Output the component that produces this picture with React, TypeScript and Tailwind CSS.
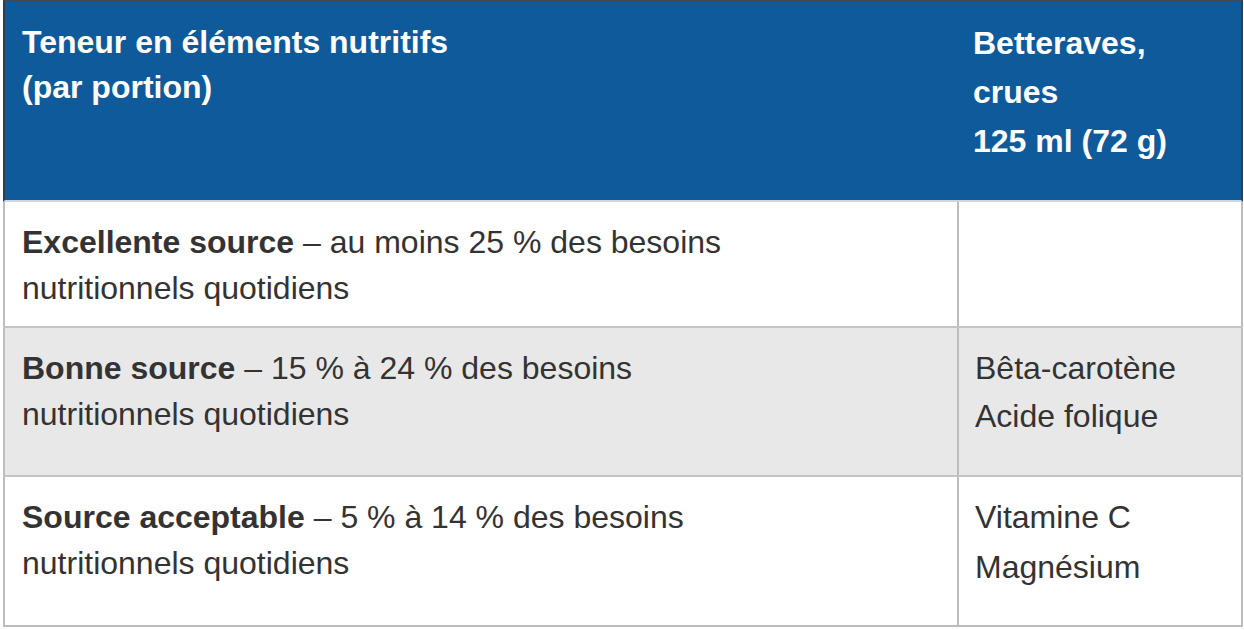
export default function App() {
  const font = { fontFamily: '"Liberation Sans", Arial, Helvetica, sans-serif' };
  return (
    <div className="w-[1244px] h-[630px] bg-white overflow-hidden" style={font}>
      <div className="ml-[3px] w-[1240px]">
        {/* Header */}
        <div className="flex h-[202px] bg-[#0f5a9b] border-t-2 border-x-2 border-t-[#45494e] border-x-[#2c3e55] border-b-2 border-b-[#cdd5dd] text-white font-bold text-[32px]">
          <div className="w-[952px] pl-[17px] pt-[18px] leading-[45px]">
            Teneur en éléments nutritifs
            <br />
            (par portion)
          </div>
          <div className="flex-1 pl-[16px] pt-[17px] leading-[49px]">
            Betteraves,
            <br />
            crues
            <br />
            125 ml (72 g)
          </div>
        </div>

        {/* Row 1 */}
        <div className="flex h-[126px] bg-white border-b-2 border-[#c4c4c4] text-[#333333] text-[32px]">
          <div className="w-[954px] border-l-2 border-[#bdbdbd] pl-[17px] pt-[17px] leading-[46px]">
            <span className="font-bold">Excellente source</span> – au moins 25&nbsp;% des besoins
            <br />
            nutritionnels quotidiens
          </div>
          <div className="flex-1 border-x-2 border-[#bdbdbd] pl-[16px] pt-[15px] leading-[49px]"></div>
        </div>

        {/* Row 2 */}
        <div className="flex h-[149px] bg-[#e8e8e8] border-b-2 border-[#c4c4c4] text-[#333333] text-[32px]">
          <div className="w-[954px] border-l-2 border-[#bdbdbd] pl-[17px] pt-[17px] leading-[46px]">
            <span className="font-bold">Bonne source</span> – 15&nbsp;% à 24&nbsp;% des besoins
            <br />
            nutritionnels quotidiens
          </div>
          <div className="flex-1 border-x-2 border-[#bdbdbd] pl-[16px] pt-[16px] leading-[48px]">
            Bêta-carotène
            <br />
            Acide folique
          </div>
        </div>

        {/* Row 3 */}
        <div className="flex h-[150px] bg-white border-b-2 border-[#bdbdbd] text-[#333333] text-[32px]">
          <div className="w-[954px] border-l-2 border-[#bdbdbd] pl-[17px] pt-[17px] leading-[46px]">
            <span className="font-bold">Source acceptable</span> – 5&nbsp;% à 14&nbsp;% des besoins
            <br />
            nutritionnels quotidiens
          </div>
          <div className="flex-1 border-x-2 border-[#bdbdbd] pl-[16px] pt-[15px] leading-[50px]">
            Vitamine C
            <br />
            Magnésium
          </div>
        </div>
      </div>
    </div>
  );
}
